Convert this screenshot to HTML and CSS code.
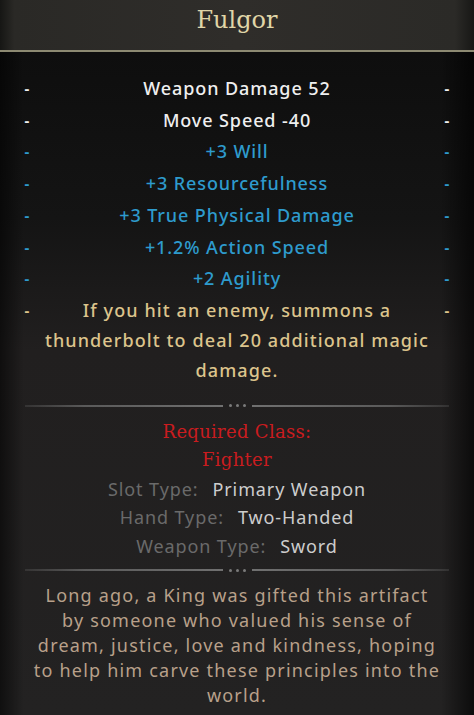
FILE: index.html
```html
<!DOCTYPE html>
<html>
<head>
<meta charset="utf-8">
<link rel="stylesheet" href="styles.css">
</head>
<body>
<div class="tooltip">
  <div class="header"><span class="title">Fulgor</span></div>
  <div class="content">
    <div class="stats">
      <div class="row white"><span class="dash">-</span><span class="txt">Weapon Damage 52</span><span class="dash">-</span></div>
      <div class="row white"><span class="dash">-</span><span class="txt">Move Speed -40</span><span class="dash">-</span></div>
      <div class="row blue"><span class="dash">-</span><span class="txt">+3 Will</span><span class="dash">-</span></div>
      <div class="row blue"><span class="dash">-</span><span class="txt">+3 Resourcefulness</span><span class="dash">-</span></div>
      <div class="row blue"><span class="dash">-</span><span class="txt">+3 True Physical Damage</span><span class="dash">-</span></div>
      <div class="row blue"><span class="dash">-</span><span class="txt">+1.2% Action Speed</span><span class="dash">-</span></div>
      <div class="row blue"><span class="dash">-</span><span class="txt">+2 Agility</span><span class="dash">-</span></div>
      <div class="row gold"><span class="dash">-</span><span class="txt">If you hit an enemy, summons a<br>thunderbolt to deal 20 additional magic<br>damage.</span><span class="dash">-</span></div>
    </div>
    <div class="divider"><span class="line left"></span><span class="dots"><i></i><i></i><i></i></span><span class="line right"></span></div>
    <div class="info">
      <div class="req">Required Class:</div>
      <div class="req">Fighter</div>
      <div class="kv"><span class="k">Slot Type:</span><span class="v">Primary Weapon</span></div>
      <div class="kv"><span class="k">Hand Type:</span><span class="v">Two-Handed</span></div>
      <div class="kv"><span class="k">Weapon Type:</span><span class="v">Sword</span></div>
    </div>
    <div class="divider d2"><span class="line left"></span><span class="dots"><i></i><i></i><i></i></span><span class="line right"></span></div>
    <div class="lore">Long ago, a King was gifted this artifact<br>by someone who valued his sense of<br>dream, justice, love and kindness, hoping<br>to help him carve these principles into the<br>world.</div>
  </div>
</div>
</body>
</html>
```
FILE: styles.css
```css
html, body {
  margin: 0;
  padding: 0;
  background: #0c0c0c;
}
.tooltip {
  width: 474px;
  height: 715px;
  overflow: hidden;
  display: flex;
  flex-direction: column;
  font-family: "Noto Sans", sans-serif;
  background: #111;
}
.header {
  height: 50px;
  flex: none;
  display: flex;
  justify-content: center;
  background: linear-gradient(90deg, #161614 0%, #2a2926 3%, #2f2d2a 50%, #2b2a27 96%, #171715 100%);
  border-bottom: 2px solid #8d8a72;
  box-shadow: 0 1px 0 #3e3c30;
}
.title {
  font-family: "DejaVu Serif", "Liberation Serif", serif;
  font-size: 24px;
  line-height: 40px;
  color: #e0d6a8;
}
.content {
  flex: 1;
  background:
    linear-gradient(90deg, rgba(0,0,0,0.55) 0%, rgba(0,0,0,0) 5%, rgba(0,0,0,0) 93%, rgba(0,0,0,0.65) 100%),
    linear-gradient(180deg, #0e0e0e 0%, #141414 25%, #211f1f 45%, #232222 100%);
  display: flex;
  flex-direction: column;
}
.stats {
  padding-top: 21px;
}
.row {
  display: grid;
  grid-template-columns: 54px minmax(0, 1fr) 54px;
  font-size: 18px;
  font-weight: 500;
  letter-spacing: 0.9px;
  line-height: 31.7px;
  text-align: center;
}
.txt {
  white-space: nowrap;
  margin: 0 -30px;
}
.dash {
  font-size: 15px;
  font-weight: 700;
  letter-spacing: 0;
}
.white { color: #efefef; }
.blue { color: #2e9bcd; }
.gold { color: #dcc48c; line-height: 30px; letter-spacing: 1.1px; }
.gold .dash { line-height: 30px; }
.divider {
  display: flex;
  align-items: center;
  gap: 6px;
  padding: 0 25px;
  height: 18px;
  margin-top: 12px;
}
.line {
  flex: 1;
  height: 2px;
}
.line.left {
  background: linear-gradient(90deg, rgba(110,110,110,0.25), #5a5a5a 30%, #707070 100%);
}
.line.right {
  background: linear-gradient(90deg, #707070, #5a5a5a 70%, rgba(110,110,110,0.25));
}
.dots {
  display: flex;
  gap: 4px;
}
.dots i {
  width: 3px;
  height: 3px;
  border-radius: 50%;
  background: #7a7a7a;
}
.info {
  padding-top: 3px;
  text-align: center;
  font-size: 18px;
  letter-spacing: 0.9px;
  line-height: 28.5px;
}
.req {
  color: #c91c1f;
  font-family: "DejaVu Serif", "Liberation Serif", serif;
  letter-spacing: 0.3px;
}
.kv .k { color: #6a6a6a; margin-right: 14px; }
.kv .v { color: #cdcdcd; }
.d2 { margin-top: 1px; }
.lore {
  text-align: center;
  color: #b8a08a;
  font-size: 18px;
  letter-spacing: 1.2px;
  line-height: 25px;
  padding-top: 4px;
}
```
